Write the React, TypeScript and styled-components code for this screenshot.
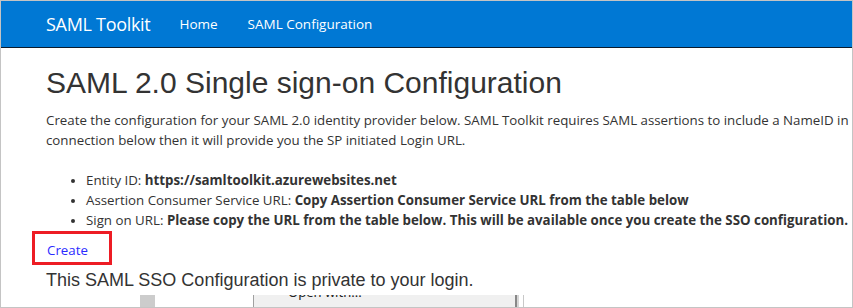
import React from 'react';
import styled, { createGlobalStyle } from 'styled-components';

const GlobalStyle = createGlobalStyle`
  html, body {
    margin: 0;
    padding: 0;
    background: #fff;
  }
`;

const Frame = styled.div`
  box-sizing: border-box;
  width: 853px;
  height: 308px;
  border: 1px solid #c4c4c4;
  overflow: hidden;
  display: flex;
  flex-direction: column;
  font-family: 'Open Sans', 'Noto Sans', sans-serif;
  color: #333;
`;

const NavBar = styled.nav`
  display: flex;
  align-items: center;
  height: 46px;
  padding-left: 45px;
  background: #0078d4;
  border-bottom: 1px solid #0b1b2c;
  flex-shrink: 0;
`;

const Brand = styled.a`
  font-size: 18px;
  color: #fff;
  margin-right: 29px;
  letter-spacing: -0.3px;
`;

const NavLink = styled.a`
  font-size: 13.5px;
  color: #fff;
  margin-right: 30px;
`;

const Container = styled.main`
  padding-left: 45px;
  flex: 1;
  display: flex;
  flex-direction: column;
`;

const Heading = styled.h1`
  margin: 18px 0 0;
  font-family: 'Liberation Sans', Arial, sans-serif;
  font-weight: 400;
  font-size: 30px;
  line-height: 33px;
  color: #333;
  white-space: nowrap;
`;

const Lead = styled.p`
  margin: 11px 0 0;
  font-size: 13.3px;
  line-height: 20px;
  white-space: nowrap;
`;

const Bullets = styled.ul`
  margin: 20px 0 0;
  padding-left: 40px;
  font-size: 13.3px;
  line-height: 20px;
  white-space: nowrap;

  li::marker {
    font-size: 12px;
  }

  b {
    font-weight: 700;
  }
`;

const Highlight = styled.span`
  box-sizing: border-box;
  display: inline-flex;
  align-items: flex-start;
  width: 80px;
  height: 34px;
  margin: 1px 0 0 -14px;
  padding: 6px 0 0 12px;
  border: 3px solid #ed1c24;
`;

const CreateLink = styled.a`
  font-size: 13.3px;
  line-height: 20px;
  color: #2b2bff;
  cursor: pointer;
`;

const Note = styled.p`
  margin: 5px 0 0;
  font-family: 'Liberation Sans', Arial, sans-serif;
  font-size: 18px;
  line-height: 20px;
  white-space: nowrap;
`;

const Strip = styled.div`
  display: flex;
  height: 12px;
  margin: auto 0 0 -45px;
`;

const Gap = styled.div<{ $w: number }>`
  width: ${p => p.$w}px;
  flex-shrink: 0;
`;

const GreyBlock = styled.div`
  width: 15px;
  background: #cccccc;
`;

const Menu = styled.div`
  display: flex;
  width: 265px;
  background: #f0f0f0;
  border-left: 1px solid #a0a0a0;
  overflow: hidden;
`;

const MenuText = styled.span`
  margin: -12px 0 0 34px;
  font-family: 'Noto Sans', sans-serif;
  font-size: 13px;
  line-height: 18px;
  color: #222;
`;

const Scroll = styled.div`
  display: flex;
  margin-left: auto;

  &::before {
    content: '';
    width: 2px;
    background: #888;
  }
  &::after {
    content: '';
    width: 2px;
    background: #d6d6d6;
  }
`;

const Edge = styled.div`
  width: 4px;
  border-right: 1px solid #c8c8c8;
`;

export default function App() {
  return (
    <>
      <GlobalStyle />
      <Frame>
        <NavBar>
          <Brand>SAML Toolkit</Brand>
          <NavLink>Home</NavLink>
          <NavLink>SAML Configuration</NavLink>
        </NavBar>
        <Container>
          <Heading>SAML 2.0 Single sign-on Configuration</Heading>
          <Lead>
            Create the configuration for your SAML 2.0 identity provider below. SAML Toolkit requires SAML assertions to include a NameID in
            <br />
            connection below then it will provide you the SP initiated Login URL.
          </Lead>
          <Bullets>
            <li>Entity ID: <b>https://samltoolkit.azurewebsites.net</b></li>
            <li>Assertion Consumer Service URL: <b>Copy Assertion Consumer Service URL from the table below</b></li>
            <li>Sign on URL: <b>Please copy the URL from the table below. This will be available once you create the SSO configuration.</b></li>
          </Bullets>
          <div>
            <Highlight>
              <CreateLink>Create</CreateLink>
            </Highlight>
          </div>
          <Note>This SAML SSO Configuration is private to your login.</Note>
          <Strip>
            <Gap $w={139} />
            <GreyBlock />
            <Gap $w={98} />
            <Menu>
              <MenuText>Open with...</MenuText>
              <Scroll />
            </Menu>
            <Edge />
          </Strip>
        </Container>
      </Frame>
    </>
  );
}
